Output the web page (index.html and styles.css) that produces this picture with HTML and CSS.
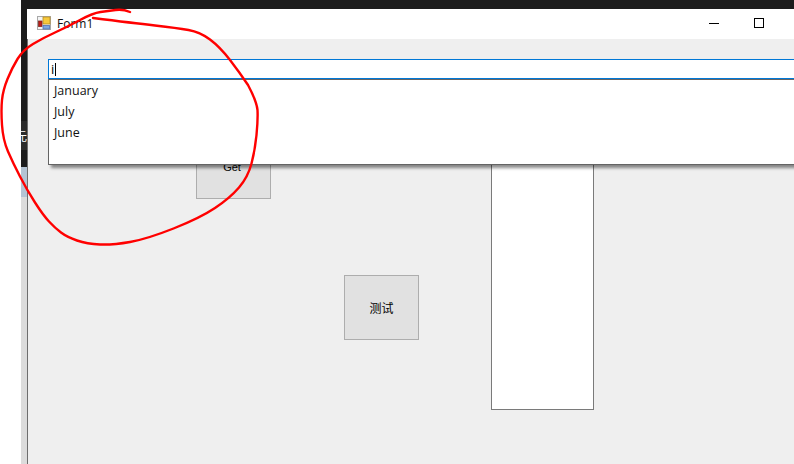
FILE: index.html
```html
<!DOCTYPE html>
<html lang="en">
<head>
    <meta charset="UTF-8">
    <link rel="stylesheet" href="styles.css">
    <title>Form1</title>
</head>
<body>
    <div class="page-edge"></div>
    <div class="screen">
        <div class="topbar"></div>
        <div class="main">
            <div class="strip">
                <div class="strip-dark"></div>
                <div class="strip-tab"><span class="strip-glyph">元</span></div>
                <div class="strip-gap"></div>
                <div class="strip-blue"></div>
                <div class="strip-grey"></div>
            </div>
            <div class="window">
                <div class="titlebar">
                    <svg class="form-icon" width="14" height="14" viewBox="0 0 14 14">
                        <rect x="0.5" y="0.5" width="13" height="13" fill="#f4f4f4" stroke="#a8a8a8"/>
                        <rect x="6" y="1" width="7" height="7" fill="#f6c83c" stroke="#b88c20" stroke-width="0.8"/>
                        <rect x="1.500" y="5" width="3.500" height="5.500" fill="#c01c18" stroke="#7e2a22" stroke-width="0.8"/>
                        <rect x="6" y="9.500" width="6.500" height="3.500" fill="#7ea6de" stroke="#4c70b0" stroke-width="0.8"/>
                    </svg>
                    <span class="title">Form1</span>
                    <div class="caption-btn"><div class="min-icon"></div></div>
                    <div class="caption-btn"><div class="max-icon"></div></div>
                </div>
                <div class="form">
                    <button class="btn btn-get">Get</button>
                    <button class="btn btn-test">测试</button>
                    <div class="listbox"></div>
                    <div class="combo">
                        <div class="combo-input">i<span class="caret"></span></div>
                        <ul class="combo-list">
                            <li>January</li>
                            <li>July</li>
                            <li>June</li>
                        </ul>
                    </div>
                </div>
            </div>
        </div>
    </div>
    <svg class="scribble" width="794" height="464" viewBox="0 0 794 464">
        <path d="M130 12 Q123 9 115.500 10 Q108 11 100.500 12 Q93 13 80 20 Q67 27 55 32.500 Q43 38 33 44 Q23 50 17.500 59 Q12 68 7.500 79 Q3 90 2 100 Q1 110 2 125 Q3 140 8 151.500 Q13 163 20 176.500 Q27 190 35 202.500 Q43 215 49 221.500 Q55 228 61 232.500 Q67 237 77 240.500 Q87 244 100 244.500 Q113 245 130 242 Q147 239 173.500 228.500 Q200 218 215 208 Q230 198 239 187.500 Q248 177 251.500 163.500 Q255 150 256.500 135 Q258 120 257.500 110 Q256.500 101 248 85 Q240 73 230 60 Q220 47 210 39.500 Q200 32 188.500 30 Q177 28 155 25.500 Q133 23 93 18"/>
    </svg>
</body>
</html>
```

FILE: styles.css
```css
* {
    box-sizing: border-box;
}

html, body {
    height: 100%;
}

body {
    margin: 0;
    display: flex;
    overflow: hidden;
    background-color: white;
    font-family: "Open Sans", "Noto Sans CJK SC", sans-serif;
    font-size: 12px;
}

.page-edge {
    width: 21px;
    flex: none;
}

.screen {
    flex: 1;
    display: flex;
    flex-direction: column;
    min-width: 0;
}

.topbar {
    height: 9px;
    background-color: #1c1c1c;
}

.main {
    flex: 1;
    display: flex;
    min-height: 0;
}

/* what shows of the window behind */
.strip {
    width: 6px;
    flex: none;
    display: flex;
    flex-direction: column;
    overflow: hidden;
}
.strip-dark {
    height: 112px;
    background-color: #1c1c1c;
}
.strip-tab {
    height: 29px;
    display: flex;
    justify-content: flex-end;
    align-items: center;
    background-color: #2b2b2b;
    color: white;
}
.strip-glyph {
    flex: none;
    font-size: 12px;
}
.strip-gap {
    height: 17px;
    background-color: #1c1c1c;
}
.strip-blue {
    height: 30px;
    background-color: #b4c4d4;
}
.strip-grey {
    flex: 1;
    background-color: #dcdcdc;
}

.window {
    flex: 1;
    display: flex;
    flex-direction: column;
    min-width: 0;
    border-left: 1px solid #6e6e6e;
}

.titlebar {
    height: 30px;
    margin-left: -1px;
    display: flex;
    align-items: center;
    padding-left: 10px;
    padding-bottom: 2px;
    background-color: white;
}
.title {
    margin-left: 6px;
    flex: 1;
    color: #111;
}
.caption-btn {
    width: 45px;
    height: 28px;
    display: flex;
    align-items: center;
    justify-content: center;
}
.caption-btn:last-child {
    margin-right: 13px;
}
.min-icon {
    width: 10px;
    height: 1px;
    background-color: black;
}
.max-icon {
    width: 10px;
    height: 10px;
    border: 1px solid black;
}

.form {
    flex: 1;
    position: relative;
    background-color: #efefef;
}

/* controls sit where the designer dropped them */
.btn {
    position: absolute;
    width: 75px;
    height: 65px;
    padding: 0;
    background-color: #e1e1e1;
    border: 1px solid #adadad;
    color: black;
    font-size: 12px;
}
.btn-get {
    left: 168px;
    top: 95px;
    padding-right: 3px;
    font-family: "Liberation Sans", sans-serif;
    font-size: 11px;
}
.btn-test {
    left: 316px;
    top: 236px;
    font-family: "Noto Sans CJK SC", sans-serif;
}

.listbox {
    position: absolute;
    left: 463px;
    top: 61px;
    width: 103px;
    height: 310px;
    background-color: white;
    border: 1px solid #7a7a7a;
}

.combo {
    position: absolute;
    left: 20px;
    top: 20px;
    right: -20px;
    box-shadow: 3px 3px 3px rgba(0, 0, 0, 0.45);
}
.combo-input {
    height: 20px;
    padding-left: 2px;
    line-height: 18px;
    background-color: white;
    border: 1px solid #0078d7;
    color: black;
    font-size: 13px;
}
.caret {
    display: inline-block;
    width: 1px;
    height: 13px;
    margin-left: 1px;
    vertical-align: -2px;
    background-color: black;
}
.combo-list {
    height: 86px;
    margin: 0;
    padding: 0 0 0 5px;
    list-style: none;
    background-color: white;
    border: 1px solid #646464;
    color: #111;
    font-size: 12.500px;
}
.combo-list li {
    height: 21px;
    line-height: 21px;
}

.scribble {
    position: absolute;
    left: 0;
    top: 0;
    pointer-events: none;
}
.scribble path {
    fill: none;
    stroke: #f00;
    stroke-width: 2.400;
    stroke-linecap: round;
}
```
